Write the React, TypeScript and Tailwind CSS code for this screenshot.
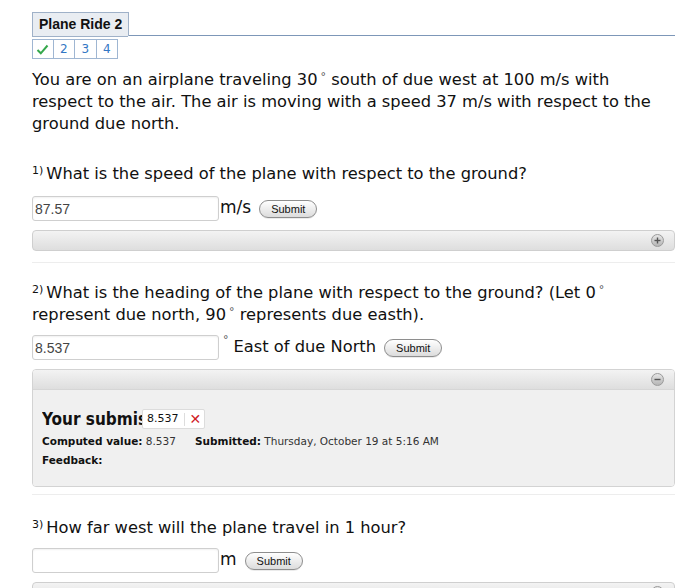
import React from "react";

const body = { fontFamily: '"DejaVu Sans", Verdana, sans-serif' };
const cond = { fontFamily: '"DejaVu Sans Condensed", "DejaVu Sans", sans-serif' };
const arial = { fontFamily: '"Liberation Sans", Arial, sans-serif' };

function SubmitBtn() {
  return (
    <button
      className="h-[18px] px-[11px] rounded-full border border-[#8e8e8e] bg-gradient-to-b from-[#ffffff] to-[#dcdcdc] text-[11px] leading-[16px] text-[#111] shadow-[0_1px_0_rgba(0,0,0,0.08)]"
      style={arial}
    >
      Submit
    </button>
  );
}

function Input({ value }: { value: string }) {
  return (
    <div
      className="w-[187px] h-[25px] shrink-0 rounded-[3px] border border-[#cfcfcf] bg-white px-[2px] flex items-center text-[14px] text-[#444] shadow-[inset_0_1px_2px_rgba(0,0,0,0.06)]"
      style={arial}
    >
      {value}
    </div>
  );
}

function Circle({ plus }: { plus: boolean }) {
  return (
    <div className="w-[13px] h-[13px] rounded-full bg-gradient-to-b from-[#e6e6e6] to-[#b5b5b5] border border-[#9a9a9a] flex items-center justify-center">
      <svg width="9" height="9" viewBox="0 0 9 9">
        <rect x="1.5" y="3.8" width="6" height="1.4" fill="#555" />
        {plus && <rect x="3.8" y="1.5" width="1.4" height="6" fill="#555" />}
      </svg>
    </div>
  );
}

function Deg() {
  return <span className="text-[11px] leading-none ml-[3px] relative -top-[5px] text-[#555]">°</span>;
}

function Q({ n, children }: { n: string; children: React.ReactNode }) {
  return (
    <div className="text-[16.3px] leading-[22px] text-[#111]" style={body}>
      <span className="text-[11px] leading-none mr-[3px] relative -top-[5px]">{n}</span>
      {children}
    </div>
  );
}

export default function App() {
  return (
    <div className="w-[700px] h-[588px] bg-white overflow-hidden pl-[32px] pr-[25px] pt-[12px] leading-[22px]" style={body}>
      {/* Title tab */}
      <div className="flex items-end">
        <div
          className="h-[24px] px-[6px] border border-[#9fb1c8] border-b-0 bg-[#e9edf2] text-[14px] font-bold leading-[23px] text-[#111]"
          style={arial}
        >
          Plane Ride 2
        </div>
        <div className="flex-1 h-[1px] bg-[#7d97b8]" />
      </div>
      <div className="h-[1px] bg-[#9fb1c8] w-[96px]" />
      {/* Nav */}
      <div className="flex mt-[2px]">
        {["✓", "2", "3", "4"].map((t, i) => (
          <div
            key={i}
            className={`w-[21.5px] h-[20px] border border-[#9fb6d2] ${i > 0 ? "border-l-0" : ""} bg-white flex items-center justify-center text-[12px] leading-[18px] ${i === 0 ? "text-[#2fa84a]" : "text-[#3277c4]"}`}
          >
            {i === 0 ? (
              <svg width="13" height="11" viewBox="0 0 13 11">
                <path d="M1.5 6 L4.8 9.3 L11.5 1.5" fill="none" stroke="#35a84c" strokeWidth="2" />
              </svg>
            ) : (
              t
            )}
          </div>
        ))}
      </div>

      <p className="mt-[10px] w-[635px] text-[16.3px] leading-[22px] text-[#111]">
        You are on an airplane traveling 30<Deg /> south of due west at 100 m/s with respect to the air. The air is moving with a
        speed 37 m/s with respect to the ground due north.
      </p>

      <div className="mt-[28px]">
        <Q n="1)">What is the speed of the plane with respect to the ground?</Q>
      </div>
      <div className="mt-[11px] h-[25px] flex items-center">
        <Input value="87.57" />
        <span className="ml-[1px] text-[17px] leading-[20px] text-[#111] -mt-[4px]">m/s</span>
        <span className="ml-[8px] flex">
          <SubmitBtn />
        </span>
      </div>
      <div className="mt-[9px] h-[21px] rounded-[4px] border border-[#cfcfcf] bg-gradient-to-b from-[#f3f3f3] to-[#dedede] flex items-center justify-end pr-[10px]">
        <Circle plus={true} />
      </div>
      <div className="mt-[11px] h-[1px] bg-[#ededed]" />

      <div className="mt-[19px] w-[620px]">
        <Q n="2)">
          What is the heading of the plane with respect to the ground? (Let 0<Deg /> represent due north, 90<Deg /> represents
          due easth).
        </Q>
      </div>
      <div className="mt-[9px] h-[25px] flex items-center">
        <Input value="8.537" />
        <span className="ml-[4px] text-[11px] leading-[12px] text-[#555] self-start -mt-[1px]">°</span>
        <span className="ml-[5px] text-[16.3px] leading-[20px] text-[#111] -mt-[1px]">East of due North</span>
        <span className="ml-[8px] flex">
          <SubmitBtn />
        </span>
      </div>
      <div className="mt-[9px] border border-[#d3d3d3] rounded-[4px] overflow-hidden">
        <div className="h-[20px] bg-gradient-to-b from-[#f3f3f3] to-[#dedede] border-b border-[#d6d6d6] flex items-center justify-end pr-[10px]">
          <Circle plus={false} />
        </div>
        <div className="bg-[#f0f0f0] h-[96px] pl-[9px] pt-[18px]">
          <div className="flex items-center h-[22px]">
            <span
              className="text-[17px] font-bold text-[#111] w-[100px] h-[22px] leading-[22px] overflow-hidden whitespace-nowrap"
              style={cond}
            >
              Your submission
            </span>
            <span className="h-[20px] bg-white border border-[#dcdcdc] rounded-[2px] flex items-center pl-[4px] pr-[3px] text-[11px] text-[#111]">
              8.537
              <span className="w-[1px] h-[13px] bg-[#ddd] mx-[5px]" />
              <span className="text-[#d0201f] text-[14px] font-bold leading-none">✕</span>
            </span>
          </div>
          <div className="mt-[3px] flex text-[10.5px] leading-[16px] text-[#111]">
            <span className="w-[153px]">
              <b>Computed value:</b> <span className="text-[#333]">8.537</span>
            </span>
            <span>
              <b>Submitted:</b> <span className="text-[#333]">Thursday, October 19 at 5:16 AM</span>
            </span>
          </div>
          <div className="mt-[3px] text-[10.5px] leading-[16px] font-bold text-[#111]">Feedback:</div>
        </div>
      </div>
      <div className="mt-[7px] h-[1px] bg-[#ededed]" />

      <div className="mt-[22px]">
        <Q n="3)">How far west will the plane travel in 1 hour?</Q>
      </div>
      <div className="mt-[9px] h-[25px] flex items-center">
        <Input value="" />
        <span className="ml-[1px] text-[17px] leading-[20px] text-[#111] -mt-[4px]">m</span>
        <span className="ml-[8px] flex">
          <SubmitBtn />
        </span>
      </div>
      <div className="mt-[9px] h-[21px] rounded-t-[4px] border border-[#cfcfcf] bg-gradient-to-b from-[#f3f3f3] to-[#dedede] flex items-center justify-end pr-[10px]">
        <Circle plus={true} />
      </div>
    </div>
  );
}
